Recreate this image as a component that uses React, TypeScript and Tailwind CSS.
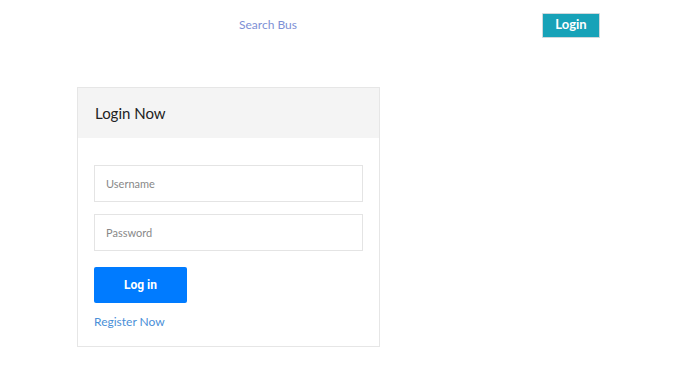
export default function App() {
  return (
    <div className="min-h-[366px] w-[680px] bg-white font-['Lato','Noto_Sans',sans-serif] text-[#333]">
      <nav className="flex h-[50px] items-center">
        <a href="#" className="ml-[239px] text-[12px] text-[#7d8fd6]">
          Search Bus
        </a>
        <button
          type="button"
          className="mr-[80px] ml-auto h-[25px] w-[58px] rounded-[1px] border border-[#cfd8dc] bg-[#17a2b8] text-[13px] font-bold text-white"
        >
          Login
        </button>
      </nav>
      <div className="mt-[37px] ml-[77px] w-[303px] border border-[#e6e6e6]">
        <div className="flex h-[50px] items-center bg-[#f4f4f4] px-[17px] text-[15px] text-[#222]">
          Login Now
        </div>
        <form className="flex flex-col px-[16px] pt-[27px] pb-[15px]">
          <input
            type="text"
            placeholder="Username"
            className="h-[37px] w-[269px] border border-[#e4e4e4] px-[11px] text-[11px] placeholder:text-[#888] outline-none"
          />
          <input
            type="password"
            placeholder="Password"
            className="mt-[12px] h-[37px] w-[269px] border border-[#e4e4e4] px-[11px] text-[11px] placeholder:text-[#888] outline-none"
          />
          <button
            type="button"
            className="mt-[16px] h-[36px] w-[93px] rounded-[2px] bg-[#007bff] font-['Roboto',sans-serif] text-[12px] font-bold text-white"
          >
            Log in
          </button>
          <a href="#" className="mt-[10px] text-[12px] leading-[18px] text-[#4a8fd8]">
            Register Now
          </a>
        </form>
      </div>
    </div>
  );
}
